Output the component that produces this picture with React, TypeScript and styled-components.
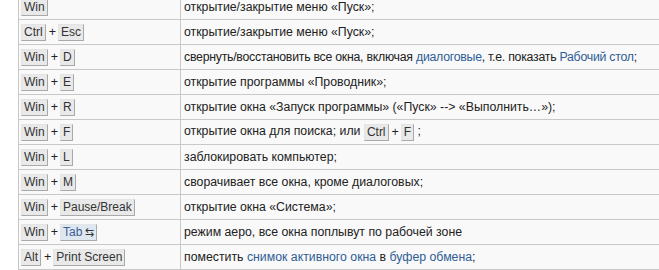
import React from "react";
import styled, { createGlobalStyle } from "styled-components";

const Global = createGlobalStyle`
  html, body { margin: 0; padding: 0; background: #ffffff; overflow: hidden; }
  body { font-family: "Liberation Sans", Arial, sans-serif; }
`;

const Wrap = styled.div`
  padding-left: 18px;
  margin-top: -6px;
`;

const Table = styled.table`
  border-collapse: collapse;
  width: 720px;
  background: #f9f9f9;
  font-family: "Liberation Sans", Arial, sans-serif;
  font-size: 12.3px;
  color: #222;
`;

const Cell = styled.td<{ $first?: boolean; $tight?: boolean }>`
  border: 1px solid #c8c8c8;
  height: 24px;
  padding: 0 ${(p) => (p.$first ? "2px" : "3px")};
  width: ${(p) => (p.$first ? "157px" : "auto")};
  vertical-align: middle;
  white-space: nowrap;
  line-height: 16px;
  letter-spacing: ${(p) => (p.$tight ? "-0.25px" : "normal")};
`;

const Key = styled.span<{ $blue?: boolean }>`
  display: inline-block;
  padding: 0 2px;
  border: 1px solid;
  border-color: #e4e4e4 #a9a9a9 #a9a9a9 #e4e4e4;
  background: ${(p) => (p.$blue ? "#dfe7f1" : "#e9e9e9")};
  color: ${(p) => (p.$blue ? "#3d5f95" : "#333")};
  font-size: 12px;
  line-height: 15px;
  letter-spacing: normal;
  vertical-align: middle;
`;

const Plus = styled.span`
  font-size: 12.5px;
  margin: 0 2px 0 3px;
  vertical-align: middle;
  color: #222;
`;

const Link = styled.span`
  color: #2f5d95;
`;

const TabArrows = styled.span`
  color: #333;
  margin-left: 3px;
  font-size: 11px;
`;

type Combo = React.ReactNode[];

const combo = (...keys: React.ReactNode[]) =>
  keys.map((k, i) => (
    <React.Fragment key={i}>
      {i > 0 && <Plus>+</Plus>}
      {k}
    </React.Fragment>
  ));

const rows: { keys: Combo; desc: React.ReactNode; tight?: boolean }[] = [
  { keys: combo(<Key>Win</Key>), desc: "открытие/закрытие меню «Пуск»;" },
  { keys: combo(<Key>Ctrl</Key>, <Key>Esc</Key>), desc: "открытие/закрытие меню «Пуск»;" },
  {
    keys: combo(<Key>Win</Key>, <Key>D</Key>),
    tight: true,
    desc: (
      <>
        свернуть/восстановить все окна, включая <Link>диалоговые</Link>, т.е. показать{" "}
        <Link>Рабочий стол</Link>;
      </>
    ),
  },
  { keys: combo(<Key>Win</Key>, <Key>E</Key>), desc: "открытие программы «Проводник»;" },
  {
    keys: combo(<Key>Win</Key>, <Key>R</Key>),
    desc: "открытие окна «Запуск программы» («Пуск» --> «Выполнить…»);",
  },
  {
    keys: combo(<Key>Win</Key>, <Key>F</Key>),
    desc: (
      <>
        открытие окна для поиска; или {combo(<Key>Ctrl</Key>, <Key>F</Key>)} ;
      </>
    ),
  },
  { keys: combo(<Key>Win</Key>, <Key>L</Key>), desc: "заблокировать компьютер;" },
  { keys: combo(<Key>Win</Key>, <Key>M</Key>), desc: "сворачивает все окна, кроме диалоговых;" },
  { keys: combo(<Key>Win</Key>, <Key>Pause/Break</Key>), desc: "открытие окна «Система»;" },
  {
    keys: combo(
      <Key>Win</Key>,
      <Key $blue>
        Tab<TabArrows>⇆</TabArrows>
      </Key>
    ),
    desc: "режим аеро, все окна поплывут по рабочей зоне",
  },
  {
    keys: combo(<Key>Alt</Key>, <Key>Print Screen</Key>),
    desc: (
      <>
        поместить <Link>снимок активного окна</Link> в <Link>буфер обмена</Link>;
      </>
    ),
  },
];

export default function App() {
  return (
    <>
      <Global />
      <Wrap>
        <Table>
          <tbody>
            {rows.map((r, i) => (
              <tr key={i}>
                <Cell $first>{r.keys}</Cell>
                <Cell $tight={r.tight}>{r.desc}</Cell>
              </tr>
            ))}
          </tbody>
        </Table>
      </Wrap>
    </>
  );
}
